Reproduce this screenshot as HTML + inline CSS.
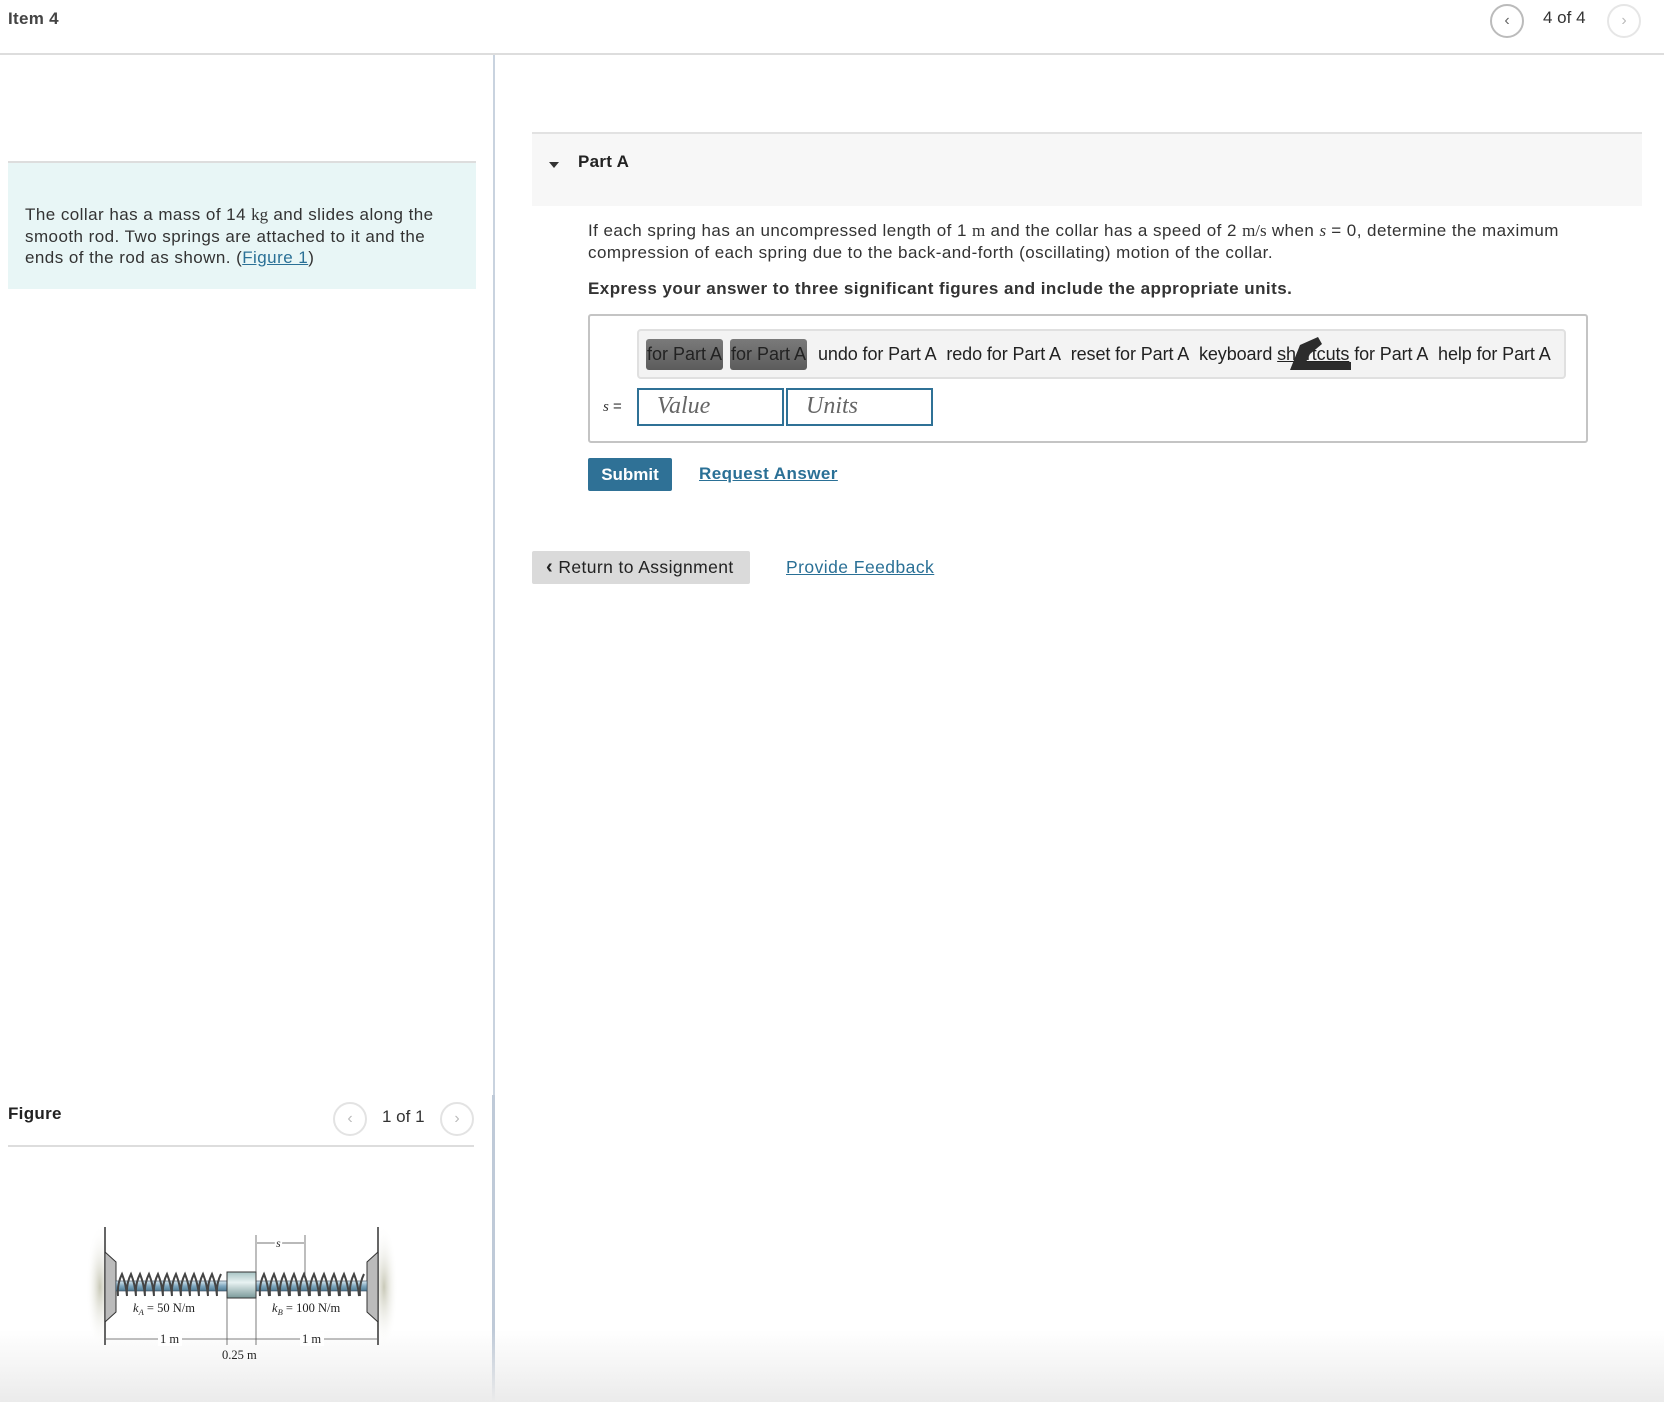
<!DOCTYPE html>
<html><head><meta charset="utf-8">
<style>
*{box-sizing:border-box;margin:0;padding:0}
html,body{width:1664px;height:1402px;overflow:hidden;background:#fff;font-family:"Liberation Sans",Arial,sans-serif;color:#333}
.abs{position:absolute}
a{color:#2a7096;text-decoration:underline}
.circ{position:absolute;width:34px;height:34px;border-radius:50%;border:2px solid #ccc;color:#666;font-size:16px;text-align:center;line-height:29px}
.serif{font-family:"Liberation Serif",serif;letter-spacing:0}
.tb{position:absolute;top:339px;height:31px;width:77px;background:linear-gradient(#7a7a7a,#5c5c5c);border-radius:3px;color:#222;font-size:18px;line-height:31px;text-align:center;white-space:nowrap;overflow:hidden}
.ls{letter-spacing:0.45px}
</style></head><body>
<div class="abs" style="left:8px;top:9px;font-size:17px;font-weight:bold;color:#444;letter-spacing:0.3px">Item 4</div>
<div class="circ" style="left:1490px;top:4px;border-color:#bbb">&lsaquo;</div>
<div class="abs" style="left:1543px;top:8px;font-size:17px;color:#333">4 of 4</div>
<div class="circ" style="left:1607px;top:4px;border-color:#e6e6e6;color:#bbb">&rsaquo;</div>
<div class="abs" style="left:0;top:53px;width:1664px;height:2px;background:#ddd"></div>

<div class="abs" style="left:493px;top:55px;width:2px;height:1347px;background:#c9d3df"></div>
<div class="abs" style="left:492px;top:1095px;width:3px;height:307px;background:#bfcad8"></div>

<div class="abs" style="left:8px;top:161px;width:468px;height:128px;background:#e8f6f6;border-top:2px solid #ddd"></div>
<div class="abs ls" style="left:25px;top:204px;width:425px;font-size:17px;line-height:21.5px;color:#333">The collar has a mass of 14 <span class="serif">kg</span> and slides along the smooth rod. Two springs are attached to it and the ends of the rod as shown. (<a>Figure 1</a>)</div>

<div class="abs" style="left:8px;top:1104px;font-size:17px;font-weight:bold;color:#222;letter-spacing:0.3px">Figure</div>
<div class="circ" style="left:333px;top:1102px;border-color:#e3e3e3;color:#bbb">&lsaquo;</div>
<div class="abs" style="left:382px;top:1107px;font-size:17px">1 of 1</div>
<div class="circ" style="left:440px;top:1102px;border-color:#e3e3e3;color:#bbb">&rsaquo;</div>
<div class="abs" style="left:8px;top:1145px;width:466px;height:2px;background:#ddd"></div>

<div class="abs" style="left:0;top:1330px;width:1664px;height:72px;background:linear-gradient(rgba(255,255,255,0),#ebebeb)"></div>

<svg class="abs" style="left:0;top:0" width="500" height="1402" viewBox="0 0 500 1402">
<defs>
<radialGradient id="sh" cx="0.5" cy="0.5" r="0.5"><stop offset="0" stop-color="#c9c9b8"/><stop offset="1" stop-color="#fff" stop-opacity="0"/></radialGradient>
<linearGradient id="rod" x1="0" y1="0" x2="0" y2="1"><stop offset="0" stop-color="#d8e8f0"/><stop offset="0.5" stop-color="#7fa8c0"/><stop offset="1" stop-color="#4d7890"/></linearGradient>
<linearGradient id="col" x1="0" y1="0" x2="0" y2="1"><stop offset="0" stop-color="#a8c4c4"/><stop offset="0.4" stop-color="#e8f2f2"/><stop offset="1" stop-color="#7a9a9a"/></linearGradient>
</defs>
<ellipse cx="100" cy="1287" rx="14" ry="62" fill="url(#sh)"/>
<ellipse cx="384" cy="1287" rx="14" ry="62" fill="url(#sh)"/>
<line x1="105" y1="1227" x2="105" y2="1345" stroke="#333" stroke-width="1.5"/>
<line x1="378" y1="1227" x2="378" y2="1345" stroke="#333" stroke-width="1.5"/>
<polygon points="105,1252 116,1262 116,1312 105,1322" fill="#bbb" stroke="#333"/>
<polygon points="378,1252 367,1262 367,1312 378,1322" fill="#bbb" stroke="#333"/>
<rect x="116" y="1281" width="251" height="10" fill="url(#rod)" stroke="#345" stroke-width="0.6"/>
<path d="M118 1296 q-1-12 4-22 q4 10 5 22 M127 1296 q-1-12 4-22 q4 10 5 22 M136 1296 q-1-12 4-22 q4 10 5 22 M145 1296 q-1-12 4-22 q4 10 5 22 M154 1296 q-1-12 4-22 q4 10 5 22 M163 1296 q-1-12 4-22 q4 10 5 22 M172 1296 q-1-12 4-22 q4 10 5 22 M181 1296 q-1-12 4-22 q4 10 5 22 M190 1296 q-1-12 4-22 q4 10 5 22 M199 1296 q-1-12 4-22 q4 10 5 22 M208 1296 q-1-12 4-22 q4 10 5 22 M217 1296 q-1-12 4-22 M260 1296 q-1-12 4-22 q4 10 5 22 M270 1296 q-1-12 4-22 q4 10 5 22 M280 1296 q-1-12 4-22 q4 10 5 22 M290 1296 q-1-12 4-22 q4 10 5 22 M300 1296 q-1-12 4-22 q4 10 5 22 M310 1296 q-1-12 4-22 q4 10 5 22 M320 1296 q-1-12 4-22 q4 10 5 22 M330 1296 q-1-12 4-22 q4 10 5 22 M340 1296 q-1-12 4-22 q4 10 5 22 M350 1296 q-1-12 4-22 q4 10 5 22 M360 1296 q-1-12 4-22" stroke="#444" stroke-width="2" fill="none"/>
<rect x="227" y="1272" width="29" height="26" fill="url(#col)" stroke="#333"/>
<line x1="256" y1="1235" x2="256" y2="1345" stroke="#444" stroke-width="0.7"/>
<line x1="305" y1="1235" x2="305" y2="1275" stroke="#444" stroke-width="0.7"/>
<line x1="227" y1="1298" x2="227" y2="1345" stroke="#444" stroke-width="0.7"/>
<line x1="257" y1="1243" x2="304" y2="1243" stroke="#444" stroke-width="0.7"/>
<text x="276" y="1247" font-family="Liberation Serif" font-style="italic" font-size="12" fill="#333" style="paint-order:stroke" stroke="#fff" stroke-width="4">s</text>
<text x="133" y="1312" font-family="Liberation Serif" font-size="12.5" fill="#222"><tspan font-style="italic">k</tspan><tspan font-size="8.5" font-style="italic" dy="3">A</tspan><tspan dy="-3"> = 50 N/m</tspan></text>
<text x="272" y="1312" font-family="Liberation Serif" font-size="12.5" fill="#222"><tspan font-style="italic">k</tspan><tspan font-size="8.5" font-style="italic" dy="3">B</tspan><tspan dy="-3"> = 100 N/m</tspan></text>
<line x1="106" y1="1339" x2="377" y2="1339" stroke="#555" stroke-width="0.7"/>
<rect x="158" y="1332" width="24" height="14" fill="#fff"/>
<rect x="300" y="1332" width="24" height="14" fill="#fff"/>
<text x="160" y="1343" font-family="Liberation Serif" font-size="12.5" fill="#222">1 m</text>
<text x="302" y="1343" font-family="Liberation Serif" font-size="12.5" fill="#222">1 m</text>
<text x="222" y="1359" font-family="Liberation Serif" font-size="12.5" fill="#222">0.25 m</text>
</svg>

<div class="abs" style="left:532px;top:132px;width:1110px;height:74px;background:#f7f7f7;border-top:2px solid #e2e2e2"></div>
<div class="abs" style="left:549px;top:162px;width:0;height:0;border-left:5px solid transparent;border-right:5px solid transparent;border-top:6px solid #333"></div>
<div class="abs" style="left:578px;top:152px;font-size:17px;font-weight:bold;color:#222;letter-spacing:0.3px">Part A</div>

<div class="abs ls" style="left:588px;top:220px;width:1020px;font-size:17px;line-height:22px;color:#333">If each spring has an uncompressed length of 1 <span class="serif">m</span> and the collar has a speed of 2 <span class="serif">m/s</span> when <span class="serif" style="font-style:italic">s</span> = 0, determine the maximum compression of each spring due to the back-and-forth (oscillating) motion of the collar.</div>
<div class="abs ls" style="left:588px;top:279px;font-size:17px;font-weight:bold;color:#333">Express your answer to three significant figures and include the appropriate units.</div>

<div class="abs" style="left:588px;top:314px;width:1000px;height:129px;border:2px solid #c4c4c4;border-radius:3px"></div>
<div class="abs" style="left:637px;top:329px;width:929px;height:50px;background:#f3f3f3;border:2px solid #e0e0e0;border-radius:4px"></div>
<div class="tb" style="left:646px">for Part A</div>
<div class="tb" style="left:730px">for Part A</div>
<div class="abs" style="left:818px;top:344px;font-size:18px;color:#222;white-space:nowrap;letter-spacing:-0.1px">undo for Part A&nbsp; redo for Part A&nbsp; reset for Part A&nbsp; keyboard <span style="text-decoration:underline">shortcuts</span> for Part A&nbsp; help for Part A</div>
<svg class="abs" style="left:1280px;top:330px" width="80" height="45"><polygon points="10,40 20,15 38,7 42,14 30,24 26,32 71,32 71,40" fill="#2c2c2c"/></svg>

<div class="abs" style="left:603px;top:398px;font-size:15px;color:#333"><span class="serif" style="font-style:italic">s</span> =</div>
<div class="abs" style="left:637px;top:388px;width:147px;height:38px;border:2px solid #2f7196;font-family:'Liberation Serif',serif;font-style:italic;font-size:24px;color:#666;padding:3px 0 0 18px">Value</div>
<div class="abs" style="left:786px;top:388px;width:147px;height:38px;border:2px solid #2f7196;font-family:'Liberation Serif',serif;font-style:italic;font-size:24px;color:#666;padding:3px 0 0 18px">Units</div>

<div class="abs" style="left:588px;top:458px;width:84px;height:33px;background:#2f7196;border-radius:2px;color:#fff;font-size:17px;font-weight:bold;text-align:center;line-height:33px">Submit</div>
<div class="abs ls" style="left:699px;top:464px;font-size:17px;font-weight:bold"><a>Request Answer</a></div>

<div class="abs" style="left:532px;top:551px;width:218px;height:33px;background:#dadada;border-radius:2px;font-size:17.5px;color:#222;line-height:33px;padding-left:14px;letter-spacing:0.4px"><b style="font-size:20px">&lsaquo;</b> Return to Assignment</div>
<div class="abs ls" style="left:786px;top:557px;font-size:17.5px"><a>Provide Feedback</a></div>
</body></html>
